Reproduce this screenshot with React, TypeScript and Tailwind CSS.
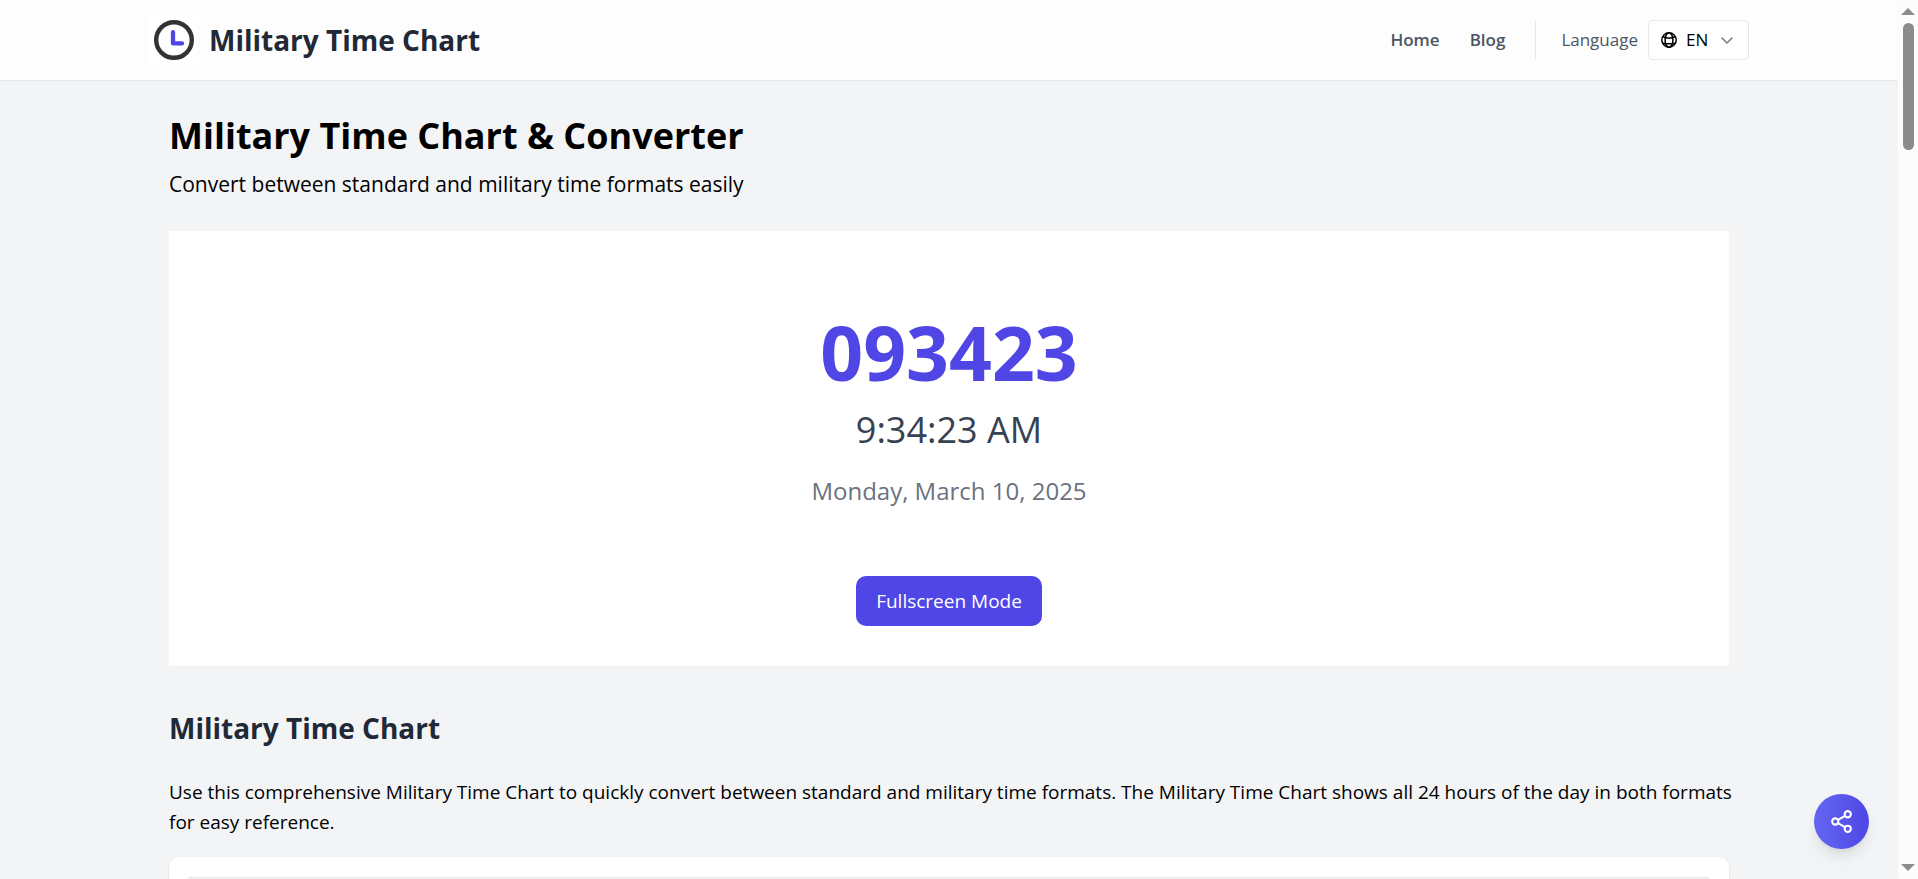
import React, { useState } from 'react'
import { FiShare2 } from 'react-icons/fi'

interface NavLink {
  label: string
  href: string
}

const navLinks: NavLink[] = [
  { label: 'Home', href: '#home' },
  { label: 'Blog', href: '#blog' },
]

const languages = ['EN']

function Logo() {
  return (
    <svg viewBox="0 0 50 50" className="size-[50px] shrink-0 bg-white" aria-hidden="true">
      <circle cx="25" cy="25" r="17.8" fill="none" stroke="#333333" strokeWidth="4.4" />
      <path
        d="M24 17.2v11.2h9"
        fill="none"
        stroke="#4f46e5"
        strokeWidth="4.3"
        strokeLinecap="round"
        strokeLinejoin="round"
      />
    </svg>
  )
}

function GlobeIcon() {
  return (
    <svg
      viewBox="0 0 16 16"
      className="size-4 shrink-0"
      fill="none"
      stroke="#000000"
      strokeWidth="1.5"
      aria-hidden="true"
    >
      <circle cx="8" cy="8" r="7.2" />
      <ellipse cx="8" cy="8" rx="3.9" ry="7.2" />
      <path d="M1.8 4.8q6.2 2.8 12.4 0M1.4 11.2q6.6 1.2 13.2 0" />
    </svg>
  )
}

function ChevronIcon() {
  return (
    <svg
      viewBox="0 0 12 7"
      className="h-[7px] w-3 shrink-0"
      fill="none"
      stroke="#808080"
      strokeWidth="1.5"
      aria-hidden="true"
    >
      <path d="M.6.6L6 6 11.4.6" />
    </svg>
  )
}

function LanguageSelect() {
  const [language, setLanguage] = useState('EN')

  return (
    <div className="flex items-center">
      <label htmlFor="language" className="mr-[10px] text-[17px] text-[#4b5563]">
        Language
      </label>
      <div className="flex h-10 items-center rounded-[5px] border border-[#e5e7eb] bg-white pr-[15px] pl-3">
        <GlobeIcon />
        <select
          id="language"
          value={language}
          onChange={(e) => setLanguage(e.target.value)}
          className="mr-3 ml-[9px] appearance-none bg-transparent text-[17px] text-black"
        >
          {languages.map((code) => (
            <option key={code} value={code}>
              {code}
            </option>
          ))}
        </select>
        <ChevronIcon />
      </div>
    </div>
  )
}

function Header() {
  return (
    <header className="border-b border-[#e5e7eb] bg-[#fdfdfd]">
      <div className="mx-auto flex h-20 max-w-[1600px] items-center justify-between">
        <a href="#home" className="flex items-center gap-[10px]">
          <Logo />
          <span className="text-[28px] font-bold text-[#1f2937]">Military Time Chart</span>
        </a>
        <nav className="flex items-center gap-[30px]">
          {navLinks.map((link) => (
            <a key={link.href} href={link.href} className="text-[17px] font-semibold text-[#4b5563]">
              {link.label}
            </a>
          ))}
          <div className="flex h-10 items-center border-l border-[#e5e7eb] pl-[25px]">
            <LanguageSelect />
          </div>
        </nav>
      </div>
    </header>
  )
}

function Clock() {
  return (
    <section className="mt-8 flex flex-col items-center bg-white pt-[75px] pb-10 text-center">
      <time className="text-[75px] leading-[92px] font-bold text-[#4f46e5]">093423</time>
      <p className="text-[36px] leading-[64px] text-[#374151]">9:34:23 AM</p>
      <p className="mt-2 text-[24px] leading-[42px] text-[#6b7280]">Monday, March 10, 2025</p>
      <button
        type="button"
        className="mt-16 h-[50px] rounded-[10px] bg-[#4f46e5] px-5 text-[19px] font-medium text-white"
      >
        Fullscreen Mode
      </button>
    </section>
  )
}

function ChartSection() {
  return (
    <section className="mt-10">
      <h2 className="text-[28px] leading-[45px] font-bold text-[#1f2937]">Military Time Chart</h2>
      <p className="-mr-5 mt-[26px] text-[19px] leading-[30px] text-black">
        Use this comprehensive Military Time Chart to quickly convert between standard and military
        time formats. The Military Time Chart shows all 24 hours of the day in both formats for easy
        reference.
      </p>
      <div className="mt-5 rounded-[10px] bg-white p-5 shadow-sm">
        <table className="w-full border-collapse">
          <tbody>
            <tr>
              <td className="h-14 border border-[#e5e7eb] bg-[#f3f4f6]" />
            </tr>
          </tbody>
        </table>
      </div>
    </section>
  )
}

function ScrollTrack() {
  return (
    <div
      className="flex w-5 shrink-0 flex-col items-center justify-between bg-[#fcfcfc] py-2"
      aria-hidden="true"
    >
      <div className="flex flex-col items-center gap-2">
        <svg viewBox="0 0 14 7" className="h-[7px] w-[14px] fill-[#8b8b8b]">
          <path d="M7 0l7 7H0z" />
        </svg>
        <div className="h-[127px] w-[11px] rounded-full bg-[#8b8b8b]" />
      </div>
      <svg viewBox="0 0 14 7" className="h-[7px] w-[14px] fill-[#8b8b8b]">
        <path d="M0 0h14L7 7z" />
      </svg>
    </div>
  )
}

export default function App() {
  return (
    <div className="flex h-screen overflow-hidden bg-[#f3f4f6] font-['Open_Sans',sans-serif]">
      <div className="min-w-0 flex-1">
        <Header />
        <main className="mx-auto max-w-[1600px] px-5 pt-[30px]">
          <h1 className="text-[36px] leading-[50px] font-bold text-black">
            Military Time Chart &amp; Converter
          </h1>
          <p className="mt-2 text-[21px] leading-[30px] text-black">
            Convert between standard and military time formats easily
          </p>
          <Clock />
          <ChartSection />
        </main>
      </div>
      <button
        type="button"
        aria-label="Share"
        className="fixed right-[49px] bottom-[30px] flex size-[55px] items-center justify-center rounded-full bg-linear-to-r from-[#6366f1] to-[#4f46e5] text-white shadow-lg"
      >
        <FiShare2 className="size-[25px]" />
      </button>
      <ScrollTrack />
    </div>
  )
}
